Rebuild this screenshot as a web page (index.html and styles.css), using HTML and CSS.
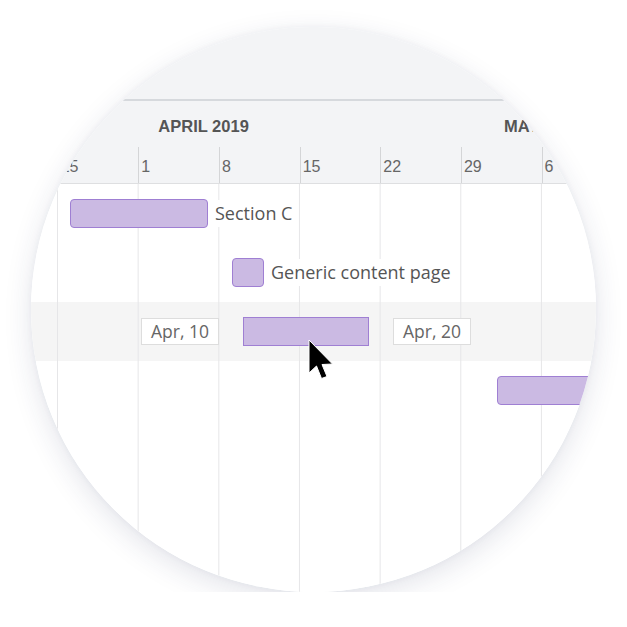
FILE: index.html
```html
<!DOCTYPE html>
<html>
<head>
<meta charset="utf-8">
<link rel="stylesheet" href="styles.css">
</head>
<body>
<div class="stage">
  <div class="lens">
    <div class="toolbar"></div>
    <div class="months">
      <div class="month" style="width:161.33px"></div>
      <div class="month" style="width:345.71px">APRIL 2019</div>
      <div class="month" style="width:357.24px">MAY 2019</div>
    </div>
    <div class="days">
      <div class="day"></div>
      <div class="day">25</div>
      <div class="day">1</div>
      <div class="day">8</div>
      <div class="day">15</div>
      <div class="day">22</div>
      <div class="day">29</div>
      <div class="day">6</div>
      <div class="day"></div>
    </div>
    <div class="rows">
      <div class="row">
        <div class="bar rounded" style="margin-left:39px;width:138px"></div>
        <span class="label">Section C</span>
      </div>
      <div class="row">
        <div class="bar rounded" style="margin-left:201px;width:32px"></div>
        <span class="label label-wide">Generic content page</span>
      </div>
      <div class="row row-active">
        <span class="date" style="margin-left:110px">Apr, 10</span>
        <div class="bar" style="width:126px"></div>
        <span class="date">Apr, 20</span>
      </div>
      <div class="row">
        <div class="bar rounded" style="margin-left:466px;width:200px"></div>
      </div>
      <div class="row row-fill"></div>
    </div>
    <svg class="cursor" width="27" height="41" viewBox="0 0 27 41">
      <path d="M1 1 L1 34 L8.5 27 L13.5 39.5 L19 37.5 L14 25.5 L24.5 25 Z" fill="#000" stroke="#fff" stroke-width="1" stroke-linejoin="round"/>
    </svg>
  </div>
</div>
</body>
</html>
```
FILE: styles.css
```css
html, body {
  margin: 0;
  padding: 0;
  background: #ffffff;
}

.stage {
  padding: 27px 0 0 31px;
}

.lens {
  position: relative;
  width: 565px;
  height: 565px;
  border-radius: 50%;
  overflow: hidden;
  background: #ffffff;
  box-shadow: 0 8px 28px rgba(40, 50, 90, 0.13), 0 0 6px rgba(40, 50, 90, 0.05);
  display: flex;
  flex-direction: column;
}

.toolbar {
  height: 72px;
  flex: none;
  background: #f3f4f6;
  border-bottom: 2px solid #d6d9dd;
}

.months {
  height: 46px;
  flex: none;
  display: flex;
  margin-left: -54px;
  background: #f3f4f6;
}

.month {
  flex: none;
  box-sizing: border-box;
  padding: 16px 0 0 20px;
  font-family: "Liberation Sans", Arial, sans-serif;
  font-weight: bold;
  font-size: 16.5px;
  color: #555555;
  white-space: nowrap;
}

.days {
  height: 36px;
  flex: none;
  display: flex;
  margin-left: -54px;
  background: #f3f4f6;
  border-bottom: 1px solid #dedfe1;
}

.day {
  flex: none;
  width: 80.667px;
  box-sizing: border-box;
  border-left: 1px solid #d4d5d7;
  padding: 11px 0 0 2px;
  font-family: "Liberation Sans", Arial, sans-serif;
  font-size: 16px;
  color: #666666;
}

.rows {
  flex: 1;
  display: flex;
  flex-direction: column;
}

.row {
  height: 59px;
  flex: none;
  display: flex;
  align-items: center;
  background-color: #ffffff;
  background-image: linear-gradient(to right, #e6e6e8 1px, transparent 1px);
  background-size: 80.667px 100%;
  background-position: 26px 0;
}

.row-active {
  background-color: #f5f5f5;
  gap: 24px;
}

.row-fill {
  flex: 1;
}

.bar {
  flex: none;
  height: 29px;
  box-sizing: border-box;
  background: #cbbae3;
  border: 1.5px solid #9f7fd3;
}

.rounded {
  border-radius: 4px;
}

.label {
  margin-left: 4px;
  padding: 0 3px;
  line-height: 27px;
  background: #ffffff;
  font-family: "Open Sans", sans-serif;
  font-size: 18px;
  color: #555555;
  white-space: nowrap;
}

.label-wide {
  margin-left: 4px;
}

.date {
  flex: none;
  width: 78px;
  height: 27px;
  box-sizing: border-box;
  border: 1px solid #dddddd;
  background: #ffffff;
  font-family: "Open Sans", sans-serif;
  font-size: 17.5px;
  line-height: 25px;
  color: #666666;
  text-align: center;
  white-space: nowrap;
}

.cursor {
  position: absolute;
  left: 277px;
  top: 312px;
}
```
